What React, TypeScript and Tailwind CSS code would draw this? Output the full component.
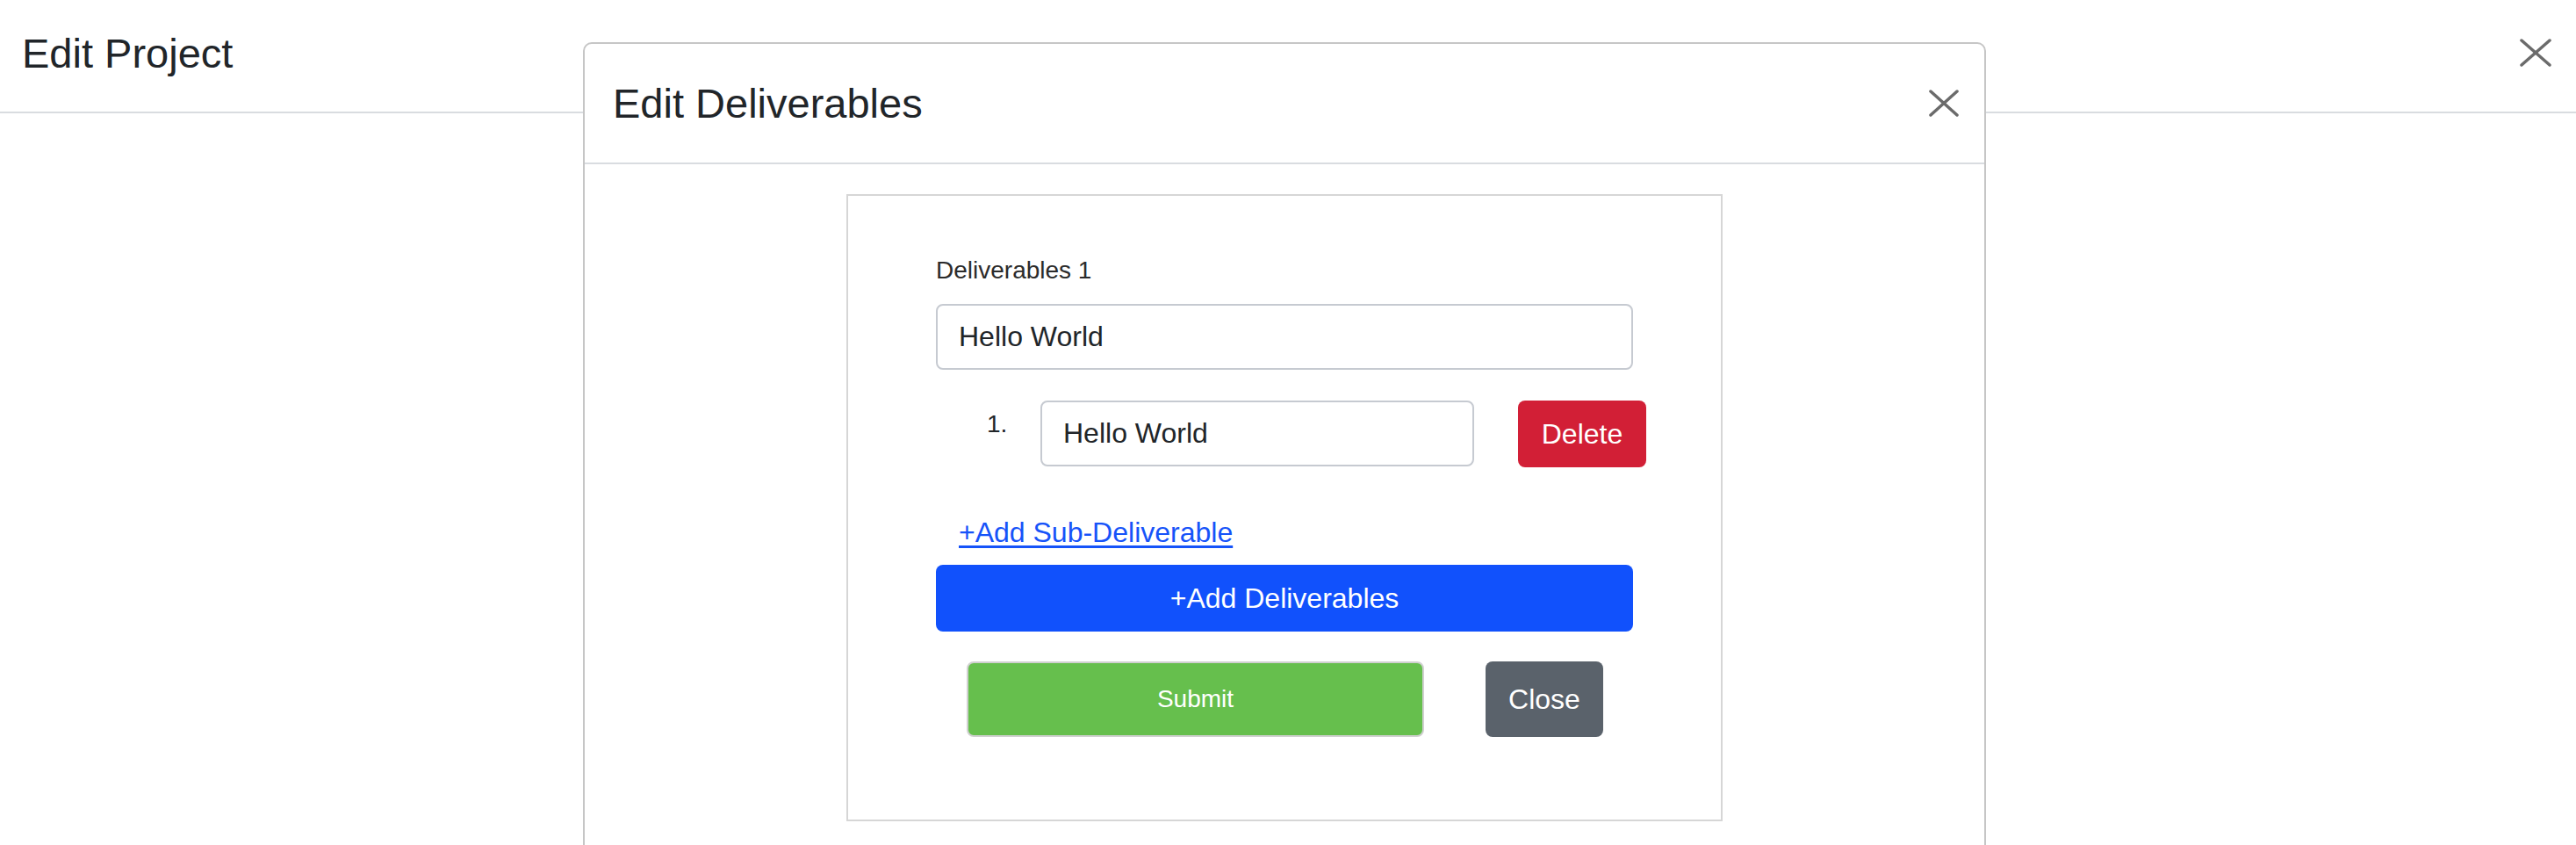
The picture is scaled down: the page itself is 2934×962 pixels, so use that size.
import React from 'react';

function CloseIcon({ w, h }: { w: number; h: number }) {
  return (
    <svg width={w} height={h} viewBox={`0 0 ${w} ${h}`} fill="none" className="block">
      <line x1="2" y1="2" x2={w - 2} y2={h - 2} stroke="#6b6b6b" strokeWidth="3.5" strokeLinecap="round" />
      <line x1={w - 2} y1="2" x2="2" y2={h - 2} stroke="#6b6b6b" strokeWidth="3.5" strokeLinecap="round" />
    </svg>
  );
}

function DeliverablesForm() {
  return (
    <div className="mx-auto w-[998px] border-2 border-[#d6d6d6] px-[100px] pt-[64px] pb-[94px]">
      <label className="block text-[28px] leading-[42px] text-[#2b2b2b]">Deliverables 1</label>
      <input
        defaultValue="Hello World"
        className="mt-[17px] block h-[75px] w-full rounded-[8px] border-2 border-[#c6cad1] bg-white px-[24px] text-[32px] text-[#212529] outline-none"
      />

      <div className="mt-[35px] flex items-start">
        <span className="ml-[58px] w-[61px] shrink-0 pt-[6px] text-[28px] leading-[42px] text-[#212529]">1.</span>
        <input
          defaultValue="Hello World"
          className="h-[75px] w-[494px] shrink-0 rounded-[8px] border-2 border-[#c6cad1] bg-white px-[24px] text-[32px] text-[#212529] outline-none"
        />
        <button className="ml-[50px] h-[76px] w-[146px] shrink-0 rounded-[8px] bg-[#d21f36] text-[32px] text-white">Delete</button>
      </div>

      <a href="#" className="ml-[26px] mt-[50px] inline-block text-[32px] leading-[48px] text-[#1653f9] underline decoration-[3px] underline-offset-[4px]">
        +Add Sub-Deliverable
      </a>

      <button className="mt-[13px] block h-[76px] w-full rounded-[8px] bg-[#1151fc] text-[32px] text-white">+Add Deliverables</button>

      <div className="mt-[34px] flex items-start">
        <button className="ml-[35px] h-[86px] w-[521px] shrink-0 rounded-[8px] border-2 border-[#d0d0d0] bg-[#66bf4d] text-[28px] text-white">
          Submit
        </button>
        <button className="ml-[70px] h-[86px] w-[134px] shrink-0 rounded-[8px] bg-[#5a626b] text-[32px] text-white">Close</button>
      </div>
    </div>
  );
}

export default function App() {
  return (
    <div className="relative h-[962px] w-full overflow-hidden bg-white font-['Liberation_Sans',Arial,sans-serif] text-[#212529]">
      <header className="flex h-[129px] items-center justify-between border-b-2 border-[#d9dce0] pl-[25px] pr-[28px] pb-[6px]">
        <h1 className="text-[47px] leading-[60px] font-normal">Edit Project</h1>
        <button className="mb-[2px]">
          <CloseIcon w={36} h={32} />
        </button>
      </header>

      <div className="absolute left-[664px] top-[48px] h-[1000px] w-[1598px] rounded-t-[10px] border-2 border-[#c6c6c6] bg-white">
        <div className="flex h-[137px] items-center justify-between border-b-2 border-[#d9dce0] pl-[32px] pr-[29px]">
          <h2 className="text-[47px] leading-[60px] font-normal">Edit Deliverables</h2>
          <button>
            <CloseIcon w={34} h={31} />
          </button>
        </div>
        <div className="pt-[34px]">
          <DeliverablesForm />
        </div>
      </div>
    </div>
  );
}
